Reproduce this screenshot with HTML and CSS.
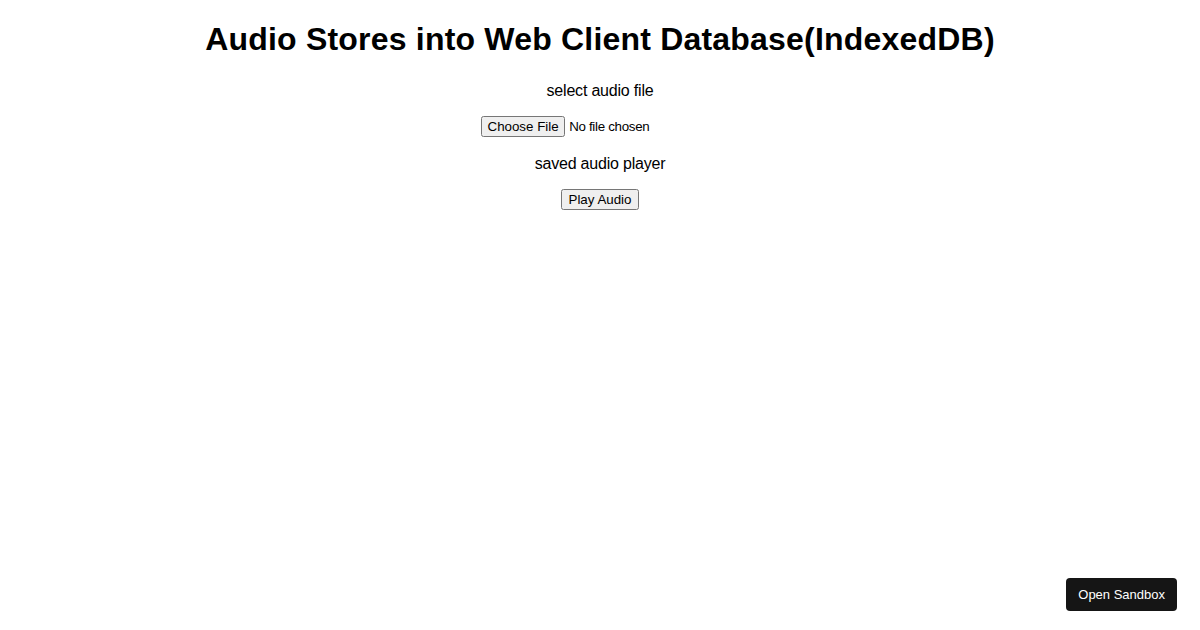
FILE: index.html
```html
<!DOCTYPE html>
<html lang="en">
<head>
    <meta charset="UTF-8">
    <title>Audio Stores into IndexedDB</title>
    <link rel="stylesheet" href="styles.css">
</head>
<body>
<div class="app">
    <h1>Audio Stores into Web Client Database(IndexedDB)</h1>
    <p>select audio file</p>
    <input type="file" id="audioFile" accept="audio/*">
    <p class="player">saved audio player</p>
    <button id="playBtn">Play Audio</button>
</div>
<a class="sandbox" href="#">Open Sandbox</a>
</body>
</html>
```
FILE: styles.css
```css
body{
    margin: 0;
    font-family: "Liberation Sans", Arial, sans-serif;
}
.app{
    text-align: center;
}
.app h1{
    margin: 21px 0 24px;
    letter-spacing: 0.2px;
}
.app p{
    letter-spacing: -0.2px;
}
.app input{
    width: 238px;
    letter-spacing: -0.3px;
}
.app input::file-selector-button{
    padding: 1px 4.5px;
    letter-spacing: 0;
}
.app .player{
    margin-top: 18px;
}
.sandbox{
    position: fixed;
    right: 23px;
    bottom: 19px;
    padding: 0 12px;
    height: 33px;
    line-height: 33px;
    background: #151515;
    color: #fff;
    font-size: 13px;
    border-radius: 4px;
    text-decoration: none;
}
```
